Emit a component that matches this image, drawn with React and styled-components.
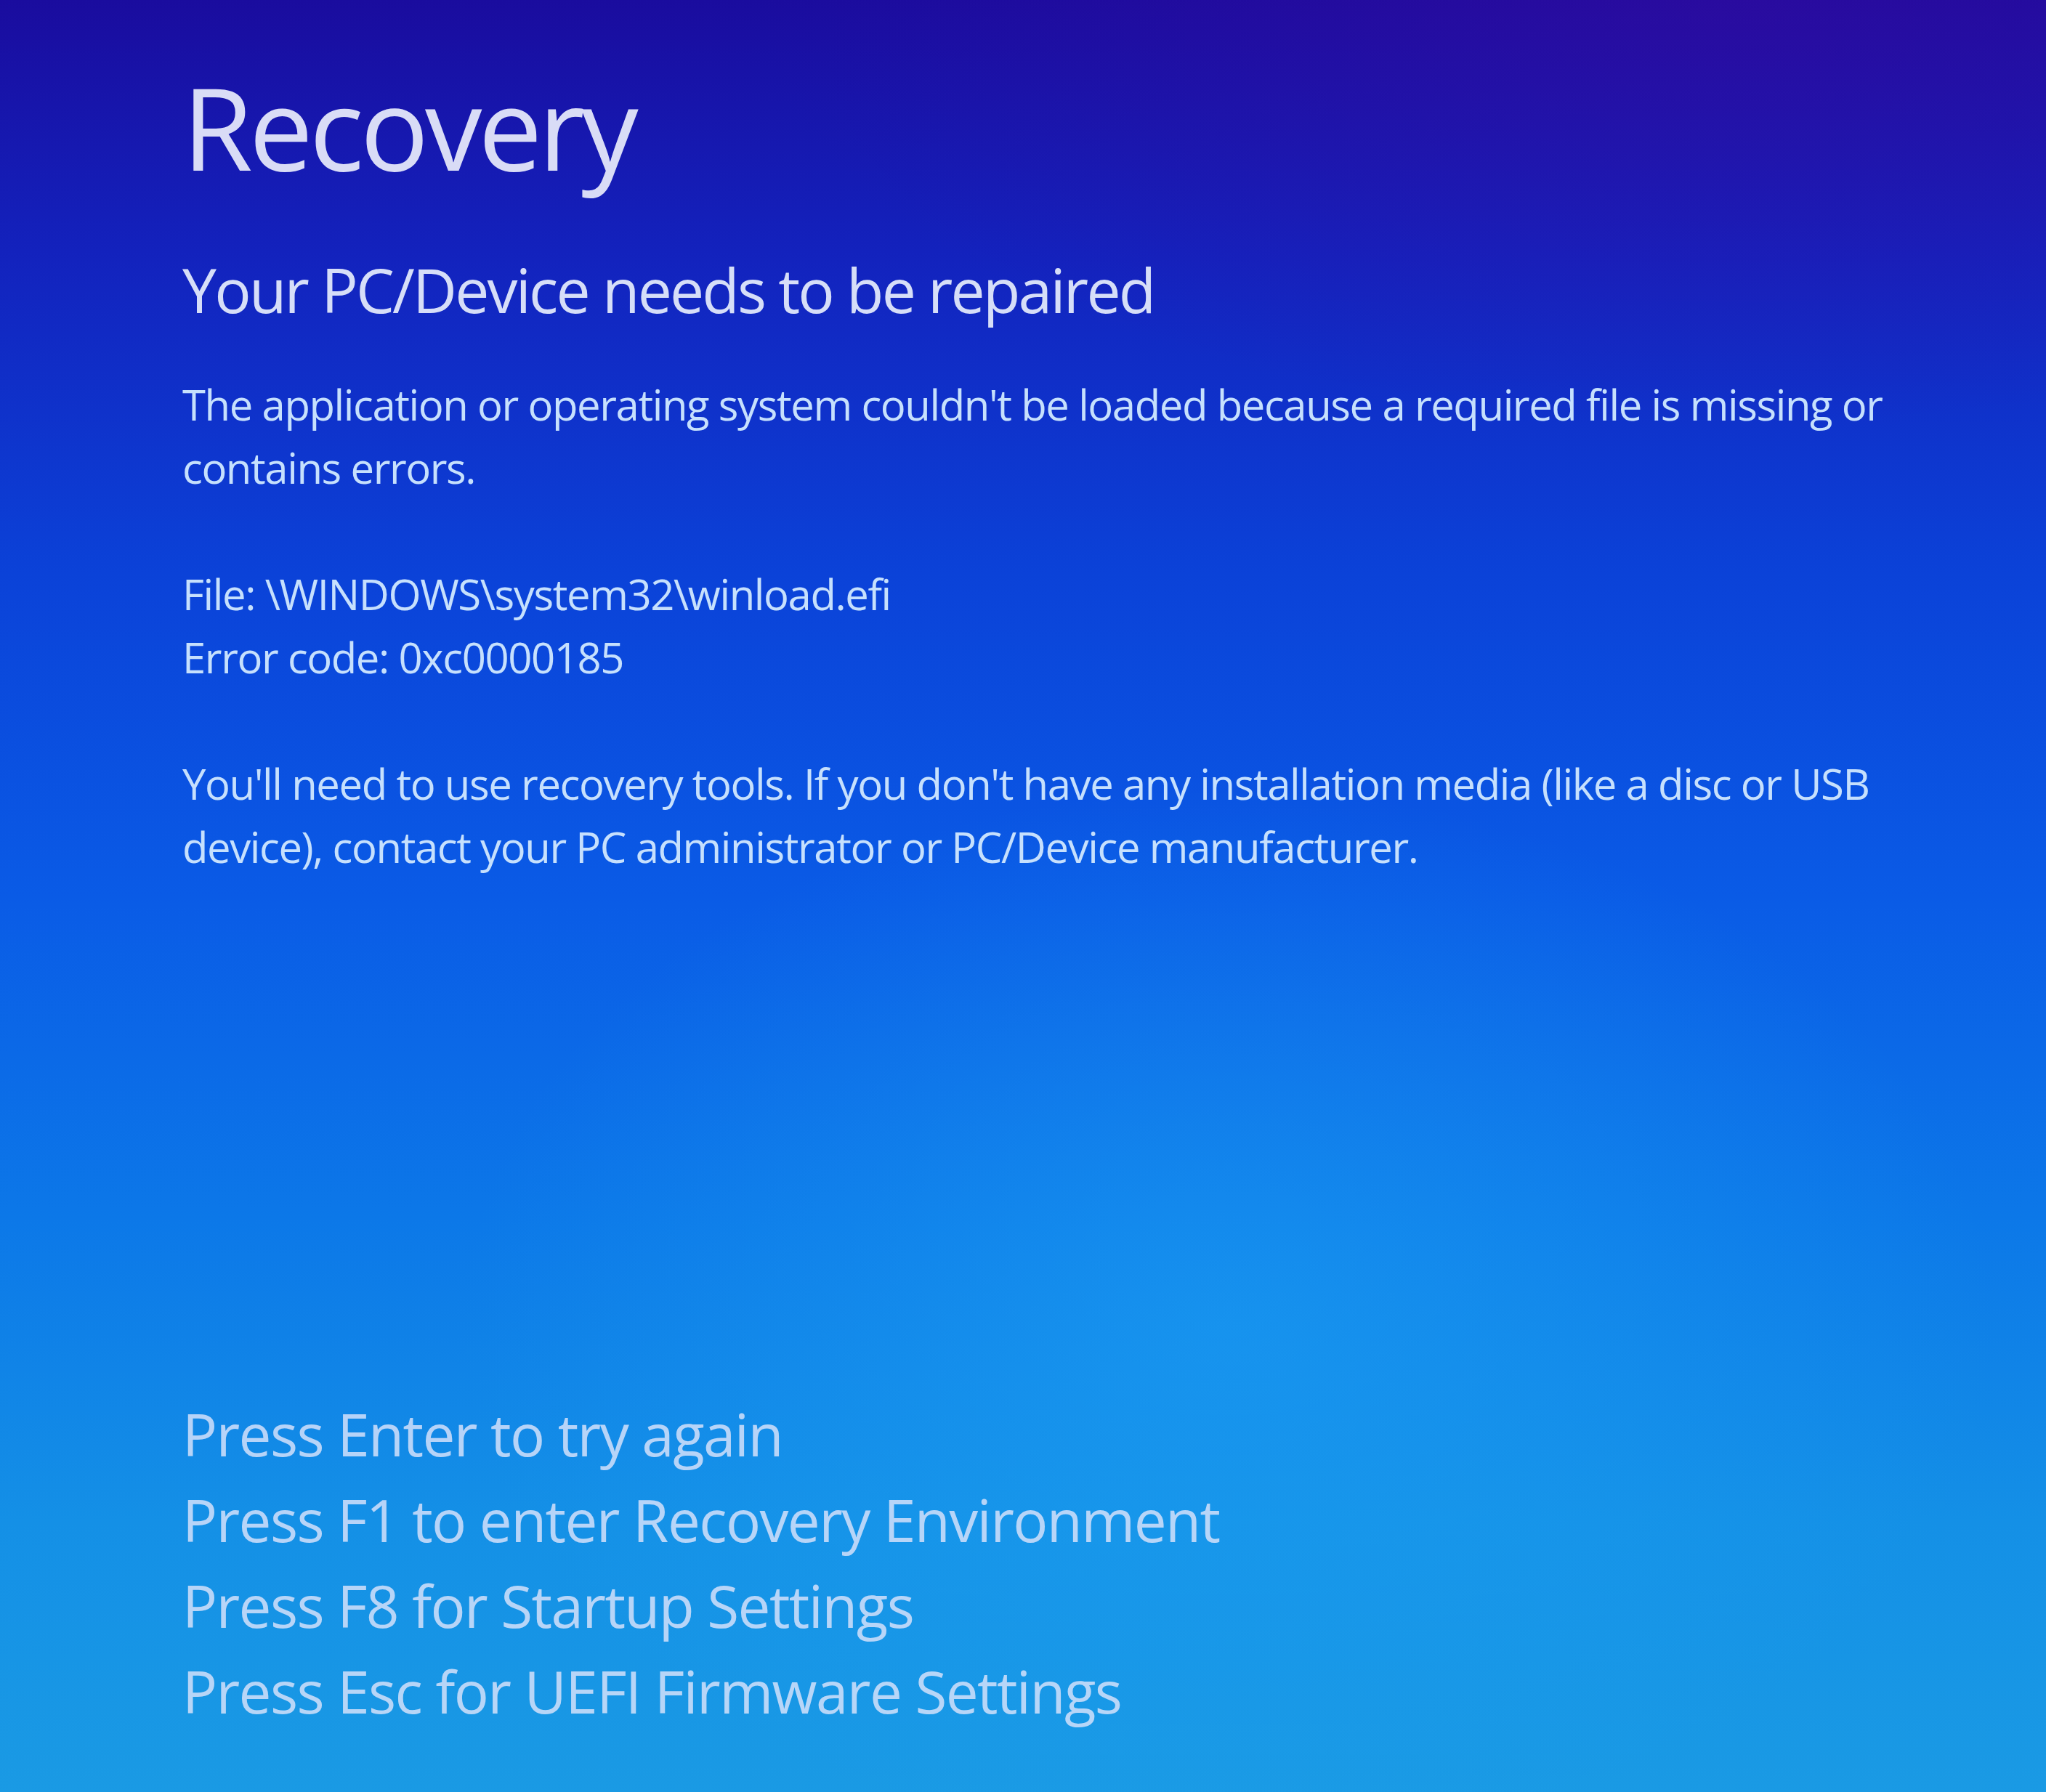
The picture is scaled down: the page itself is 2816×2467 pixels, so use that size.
import React from 'react';
import styled, { createGlobalStyle } from 'styled-components';

const GlobalStyle = createGlobalStyle`
  html, body {
    margin: 0;
    padding: 0;
  }
  body {
    font-family: "Open Sans", "Noto Sans", "Liberation Sans", sans-serif;
    background: #0b55e2;
  }
`;

const Screen = styled.div`
  box-sizing: border-box;
  width: 2816px;
  min-height: 2467px;
  padding: 80px 0 80px 251px;
  display: flex;
  flex-direction: column;
  justify-content: space-between;
  background:
    radial-gradient(ellipse 50% 40% at 60% 74%, rgba(30, 165, 245, 0.5), rgba(30, 165, 245, 0) 75%),
    radial-gradient(ellipse 60% 30% at 85% 0%, rgba(60, 10, 160, 0.45), rgba(60, 10, 160, 0) 80%),
    linear-gradient(180deg, #1a0c9e 0%, #1322bd 14%, #0b42d8 32%, #0a5be6 50%, #0c78e8 68%, #1490e6 85%, #1a9ae4 100%);
  color: #cbe0fc;
`;

const Top = styled.div`
  display: flex;
  flex-direction: column;
`;

const Title = styled.h1`
  margin: 0;
  font-weight: 400;
  font-size: 157px;
  line-height: 188px;
  color: #d9dcf6;
  letter-spacing: -5.2px;
`;

const Subtitle = styled.h2`
  margin: 81px 0 0;
  font-weight: 400;
  font-size: 84px;
  line-height: 100px;
  color: #d6def8;
  letter-spacing: -2.8px;
`;

const Para = styled.p`
  margin: ${p => (p.$first ? '64px' : '87px')} 0 0;
  max-width: 2362px;
  font-size: 58px;
  line-height: 87px;
  color: #c6e0fd;
  letter-spacing: -1.4px;
`;

const Line = styled.div`
  white-space: nowrap;
`;

const Options = styled.div`
  display: flex;
  flex-direction: column;
`;

const Option = styled.div`
  font-size: 80px;
  line-height: 118px;
  color: rgba(212, 224, 250, 0.85);
  letter-spacing: -1.6px;
`;

const options = [
  'Press Enter to try again',
  'Press F1 to enter Recovery Environment',
  'Press F8 for Startup Settings',
  'Press Esc for UEFI Firmware Settings',
];

export default function App() {
  return (
    <>
      <GlobalStyle />
      <Screen>
        <Top>
          <Title>Recovery</Title>
          <Subtitle>Your PC/Device needs to be repaired</Subtitle>
          <Para $first>
            The application or operating system couldn't be loaded because a required file is missing or contains errors.
          </Para>
          <Para>
            <Line>File: \WINDOWS\system32\winload.efi</Line>
            <Line>Error code: 0xc0000185</Line>
          </Para>
          <Para>
            You'll need to use recovery tools. If you don't have any installation media (like a disc or USB device), contact your PC administrator or PC/Device manufacturer.
          </Para>
        </Top>
        <Options>
          {options.map(o => (
            <Option key={o}>{o}</Option>
          ))}
        </Options>
      </Screen>
    </>
  );
}
